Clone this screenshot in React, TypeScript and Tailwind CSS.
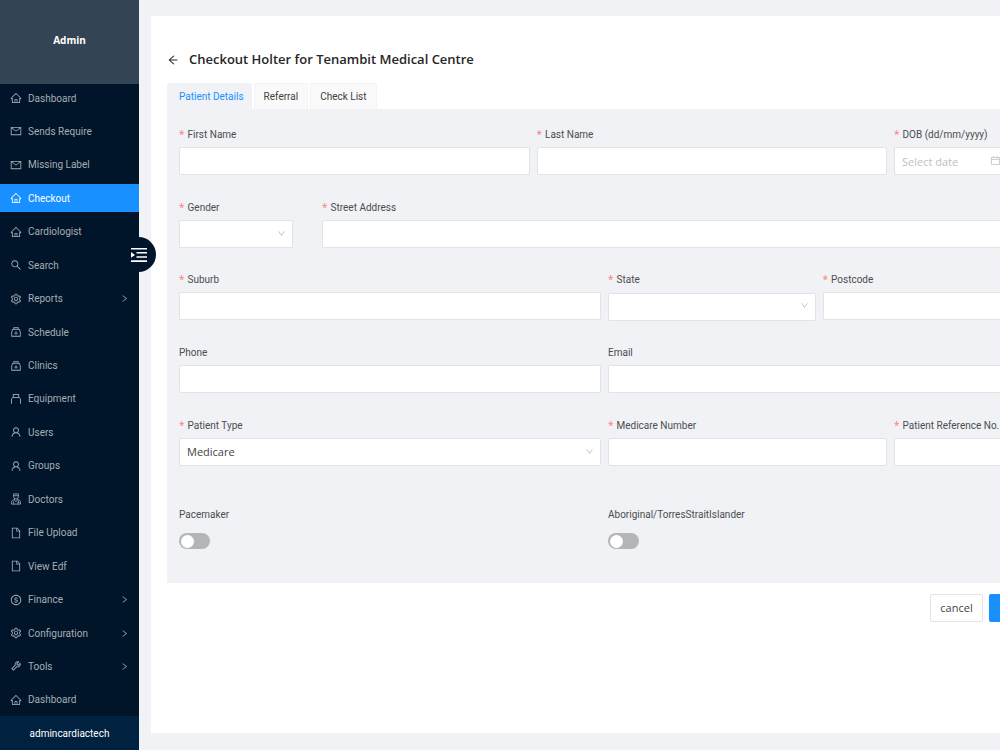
import type { ComponentType, ReactNode } from 'react';
import {
  AiOutlineArrowLeft,
  AiOutlineCalendar,
  AiOutlineDollar,
  AiOutlineDown,
  AiOutlineFile,
  AiOutlineHome,
  AiOutlineMail,
  AiOutlineMedicineBox,
  AiOutlineRight,
  AiOutlineSearch,
  AiOutlineSetting,
  AiOutlineTool,
  AiOutlineUser,
} from 'react-icons/ai';

type IconType = ComponentType<{ className?: string }>;

function EquipmentIcon({ className }: { className?: string }) {
  return (
    <svg viewBox="0 0 20 20" className={className} fill="none" stroke="currentColor" strokeWidth="1.5">
      <path d="M5 2.5h10M5.500 2.500v5M14.500 2.500v5M2.500 18v-6.500c0-2.500 1-4 3-4h9c2 0 3 1.500 3 4V18" />
    </svg>
  );
}

function DoctorIcon({ className }: { className?: string }) {
  return (
    <svg viewBox="0 0 20 20" className={className} fill="none" stroke="currentColor" strokeWidth="1.4">
      <path d="M6 1.5h8V6a4 4 0 0 1-8 0zM6 4.5h8M7.5 9.5L7 11.5l3 2.5 3-2.5-.5-2M7 11.5c-3 0-4.5 1.500-4.500 4v3h15v-3c0-2.500-1.500-4-4.500-4M6 14v4M14 13v3.500M12 16.500h4" />
    </svg>
  );
}

function UnfoldIcon({ className }: { className?: string }) {
  return (
    <svg viewBox="0 0 16 16" className={className} fill="currentColor">
      <path d="M0 1h16v1.6H0zM5.5 5h10.5v1.6H5.5zM5.5 9.2h10.5v1.6H5.5zM0 13.3h16v1.6H0zM0 5l4 2.9L0 10.8z" />
    </svg>
  );
}

type Item = { label: string; icon: IconType; children?: boolean; active?: boolean };

const items: Item[] = [
  { label: 'Dashboard', icon: AiOutlineHome },
  { label: 'Sends Require', icon: AiOutlineMail },
  { label: 'Missing Label', icon: AiOutlineMail },
  { label: 'Checkout', icon: AiOutlineHome, active: true },
  { label: 'Cardiologist', icon: AiOutlineHome },
  { label: 'Search', icon: AiOutlineSearch },
  { label: 'Reports', icon: AiOutlineSetting, children: true },
  { label: 'Schedule', icon: AiOutlineMedicineBox },
  { label: 'Clinics', icon: AiOutlineMedicineBox },
  { label: 'Equipment', icon: EquipmentIcon },
  { label: 'Users', icon: AiOutlineUser },
  { label: 'Groups', icon: AiOutlineUser },
  { label: 'Doctors', icon: DoctorIcon },
  { label: 'File Upload', icon: AiOutlineFile },
  { label: 'View Edf', icon: AiOutlineFile },
  { label: 'Finance', icon: AiOutlineDollar, children: true },
  { label: 'Configuration', icon: AiOutlineSetting, children: true },
  { label: 'Tools', icon: AiOutlineTool, children: true },
  { label: 'Dashboard', icon: AiOutlineHome },
];

function Sidebar() {
  return (
    <aside className="relative flex w-[139px] shrink-0 flex-col bg-[#001529] font-['Roboto','Noto_Sans',sans-serif] text-[10px]">
      <div className="flex h-[84px] items-center justify-center bg-[#334454] pb-1 font-['Open_Sans','Noto_Sans',sans-serif] font-bold text-white">Admin</div>
      <nav className="flex flex-1 flex-col pb-0.5">
        <ul className="flex flex-1 flex-col justify-between">
          {items.map(({ label, icon: Icon, children, active }, i) => (
            <li key={i}>
              <a
                href="#"
                className={
                  active
                    ? 'flex h-7 items-center bg-[#1890ff] pr-2.5 pl-2.5 text-white'
                    : 'flex h-7 items-center pr-2.5 pl-2.5 text-[#a6adb4]'
                }
              >
                <Icon className="mr-1.5 size-3 shrink-0" />
                <span className="flex-1 whitespace-nowrap">{label}</span>
                {children && <AiOutlineRight className="size-[9px]" />}
              </a>
            </li>
          ))}
        </ul>
      </nav>
      <div className="flex h-[34px] items-center justify-center bg-[#002140] text-white">admincardiactech</div>
      <button
        type="button"
        aria-label="Toggle menu"
        className="absolute top-[237px] -right-[17px] flex size-[35px] items-center justify-center rounded-full bg-[#001529] text-white"
      >
        <UnfoldIcon className="size-4" />
      </button>
    </aside>
  );
}

function Field({ id, label, required, className, children }: { id: string; label: string; required?: boolean; className: string; children: ReactNode }) {
  return (
    <div className={className}>
      <label htmlFor={id} className="flex h-[27px] items-center gap-[3px] pt-0.5 font-['Roboto','Noto_Sans',sans-serif] text-[10px] whitespace-nowrap text-[#4c4d50]">
        {required && <span className="font-['Open_Sans',sans-serif] text-[#ff7875]">*</span>}
        {label}
      </label>
      {children}
    </div>
  );
}

const box = 'h-7 w-full rounded-xs border border-[#e2e3e6] bg-white px-[7px] text-[11px] text-[#444] outline-none placeholder:text-[#bfbfbf]';

function TextInput({ id }: { id: string }) {
  return <input id={id} type="text" className={box} />;
}

function Select({ id, options }: { id: string; options: string[] }) {
  return (
    <div className="relative">
      <select id={id} className={box + ' appearance-none'}>
        {options.map((o) => (
          <option key={o}>{o}</option>
        ))}
      </select>
      <AiOutlineDown className="pointer-events-none absolute top-[9px] right-[7px] size-[9px] text-[#bfbfbf]" />
    </div>
  );
}

function Toggle({ id }: { id: string }) {
  return (
    <label className="mt-1.5 flex h-4 w-[31px] items-center rounded-full bg-[#b4b5b8] px-0.5">
      <input id={id} type="checkbox" role="switch" className="peer sr-only" />
      <span className="size-[13px] rounded-full bg-white peer-checked:ml-auto" />
    </label>
  );
}

const row = 'grid grid-cols-24 gap-x-[7px]';

export default function App() {
  return (
    <div className="overflow-x-hidden font-['Open_Sans','Noto_Sans',sans-serif]">
      <div className="flex min-h-screen min-w-[1069px] bg-[#f0f2f5]">
        <Sidebar />
        <main className="flex flex-1 flex-col pt-4 pr-[11px] pb-[17px] pl-3">
          <div className="flex-1 bg-white px-4 pt-8">
            <header className="flex h-6 items-center gap-2.5">
              <button type="button" aria-label="Back" className="text-[#262626]">
                <AiOutlineArrowLeft className="size-3" />
              </button>
              <h1 className="text-[13px] font-semibold text-[#262626]">Checkout Holter for Tenambit Medical Centre</h1>
            </header>
            <div role="tablist" className="mt-[11px] flex h-[26px] gap-0.5 font-['Roboto','Noto_Sans',sans-serif] text-[10px]">
              <button type="button" role="tab" aria-selected="true" className="rounded-t-xs bg-[#f0f2f5] pr-2 pl-3 text-[#1890ff]">
                Patient Details
              </button>
              <button type="button" role="tab" aria-selected="false" className="rounded-t-xs border border-b-0 border-[#f3f3f3] bg-[#fafafa] px-[9px] text-[#404040]">
                Referral
              </button>
              <button type="button" role="tab" aria-selected="false" className="rounded-t-xs border border-b-0 border-[#f3f3f3] bg-[#fafafa] px-[9px] text-[#404040]">
                Check List
              </button>
            </div>
            <form>
              <div className="bg-[#f0f2f5] px-3 pt-[11px] pb-[34px]">
                <div className="flex min-h-[346px] flex-col justify-between">
                  <div className={row}>
                    <Field id="first" label="First Name" required className="col-span-10">
                      <TextInput id="first" />
                    </Field>
                    <Field id="last" label="Last Name" required className="col-span-10">
                      <TextInput id="last" />
                    </Field>
                    <Field id="dob" label="DOB (dd/mm/yyyy)" required className="col-span-4">
                      <div className="relative w-[114px]">
                        <input id="dob" type="text" placeholder="Select date" className={box} />
                        <AiOutlineCalendar className="pointer-events-none absolute top-2 right-[7px] size-[11px] text-[#bfbfbf]" />
                      </div>
                    </Field>
                  </div>
                  <div className={row}>
                    <Field id="gender" label="Gender" required className="col-span-4 pr-[22px]">
                      <Select id="gender" options={['']} />
                    </Field>
                    <Field id="street" label="Street Address" required className="col-span-20">
                      <TextInput id="street" />
                    </Field>
                  </div>
                  <div className={row}>
                    <Field id="suburb" label="Suburb" required className="col-span-12">
                      <TextInput id="suburb" />
                    </Field>
                    <Field id="state" label="State" required className="col-span-6">
                      <Select id="state" options={['']} />
                    </Field>
                    <Field id="postcode" label="Postcode" required className="col-span-6">
                      <TextInput id="postcode" />
                    </Field>
                  </div>
                  <div className={row}>
                    <Field id="phone" label="Phone" className="col-span-12">
                      <TextInput id="phone" />
                    </Field>
                    <Field id="email" label="Email" className="col-span-12">
                      <TextInput id="email" />
                    </Field>
                  </div>
                  <div className={row}>
                    <Field id="type" label="Patient Type" required className="col-span-12">
                      <Select id="type" options={['Medicare']} />
                    </Field>
                    <Field id="medicare" label="Medicare Number" required className="col-span-8">
                      <TextInput id="medicare" />
                    </Field>
                    <Field id="reference" label="Patient Reference No." required className="col-span-4">
                      <TextInput id="reference" />
                    </Field>
                  </div>
                </div>
                <div className={row + ' mt-[34px]'}>
                  <Field id="pacemaker" label="Pacemaker" className="col-span-12">
                    <Toggle id="pacemaker" />
                  </Field>
                  <Field id="islander" label="Aboriginal/TorresStraitIslander" className="col-span-12">
                    <Toggle id="islander" />
                  </Field>
                </div>
              </div>
              <div className="mt-[11px] flex justify-end gap-1.5 text-[11px]">
                <button type="button" className="h-7 w-[53px] rounded-xs border border-[#e2e3e6] bg-white text-[#444]">
                  cancel
                </button>
                <button type="button" aria-label="Next" className="h-7 w-[53px] rounded-xs bg-[#1890ff]" />
              </div>
            </form>
          </div>
        </main>
      </div>
    </div>
  );
}
